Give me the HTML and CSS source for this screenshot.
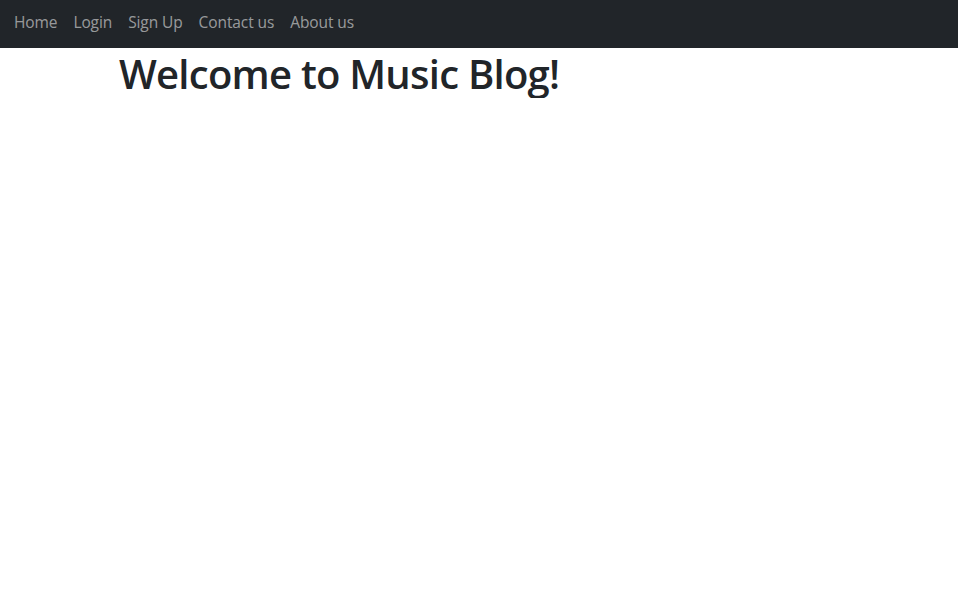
FILE: index.html
```html
<!DOCTYPE html>
<html>
<head>
<meta charset="utf-8">
<link rel="stylesheet" href="styles.css">
</head>
<body>
<nav class="navbar">
  <a class="nav-link" href="#">Home</a>
  <a class="nav-link" href="#">Login</a>
  <a class="nav-link" href="#">Sign Up</a>
  <a class="nav-link" href="#">Contact us</a>
  <a class="nav-link" href="#">About us</a>
</nav>
<main class="container">
  <h1 class="title">Welcome to Music Blog!</h1>
</main>
</body>
</html>
```
FILE: styles.css
```css
html, body {
  margin: 0;
  padding: 0;
  background: #fff;
  font-family: "Open Sans", "Noto Sans", sans-serif;
  color: #212529;
}
.navbar {
  height: 48px;
  background: #212529;
  display: flex;
  align-items: center;
  padding: 0 6px;
}
.nav-link {
  color: rgba(255, 255, 255, 0.55);
  text-decoration: none;
  font-size: 15.5px;
  letter-spacing: -0.1px;
  padding: 0 8px;
  line-height: 24px;
  margin-top: -4px;
}
.container {
  padding-left: 119px;
}
.title {
  margin: 0;
  padding-top: 2px;
  font-size: 40px;
  font-weight: 600;
  letter-spacing: -0.75px;
  line-height: 48px;
}
```
